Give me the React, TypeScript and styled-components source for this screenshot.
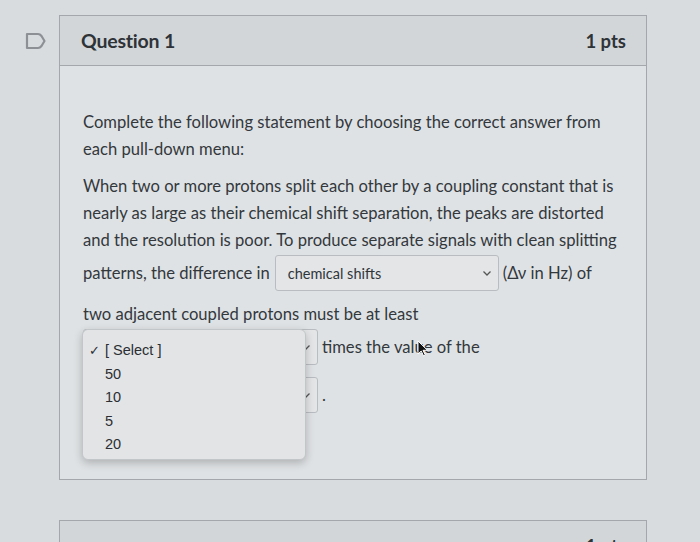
import { createGlobalStyle, styled } from 'styled-components'

const GlobalStyle = createGlobalStyle`
  html, body {
    margin: 0;
    padding: 0;
    background: #d9dcdf;
    font-family: Lato, "Open Sans", sans-serif;
    color: #33383d;
  }
`

const Page = styled.div`
  position: relative;
  display: flex;
  flex-direction: column;
  gap: 40px;
  padding-top: 15px;
  height: 542px;
  box-sizing: border-box;
  overflow: hidden;
`

const QuestionRow = styled.div`
  display: flex;
  align-items: flex-start;
`

const FlagColumn = styled.div`
  width: 59px;
  flex: none;
  display: flex;
  justify-content: flex-start;
  padding-top: 17px;
  padding-left: 25px;
  box-sizing: border-box;
`

const Card = styled.div`
  width: 586px;
  border: 1px solid #a4a8ac;
  background: #dfe2e4;
`

const Header = styled.div`
  height: 49px;
  display: flex;
  align-items: center;
  justify-content: space-between;
  padding: 0 20px 0 21px;
  background: #d3d6d9;
  border-bottom: 1px solid #a4a8ac;
`

const Title = styled.h2`
  margin: 0;
  font-size: 19.5px;
  font-weight: 700;
  color: #2e3338;
  letter-spacing: -0.2px;
`

const Points = styled.span`
  font-size: 18.5px;
  font-weight: 700;
  color: #2e3338;
`

const Body = styled.div`
  padding: 43px 20px 66px 23px;
  font-size: 16.6px;
  line-height: 27px;
`

const Para = styled.p`
  margin: 0 0 10px;
`

const Line = styled.div<{ $gap?: number }>`
  display: flex;
  align-items: center;
  margin-top: ${(p) => p.$gap ?? 0}px;
  min-height: 27px;
`

const SelectWrap = styled.span`
  position: relative;
  display: inline-flex;
`

const SelectBox = styled.span<{ $width: number; $flush?: boolean }>`
  display: inline-flex;
  align-items: center;
  justify-content: space-between;
  box-sizing: border-box;
  width: ${(p) => p.$width}px;
  height: 36px;
  padding: 0 6px 0 12px;
  margin: 0 4px 0 ${(p) => (p.$flush ? 0 : 5)}px;
  border: 1px solid #b9bdc1;
  border-radius: 3px;
  background: #e3e5e7;
  font-size: 14.5px;
  color: #30353a;
`

const Menu = styled.div`
  position: absolute;
  left: -1px;
  top: 0;
  width: 224px;
  box-sizing: border-box;
  padding: 9px 0 2px;
  border-radius: 6px;
  border: 1px solid #c3c6c9;
  background: #e2e4e6;
  box-shadow: 0 3px 8px rgba(0, 0, 0, 0.22);
  font-family: "Liberation Sans", Arial, sans-serif;
  font-size: 14.5px;
  line-height: 23.5px;
  color: #2b2f33;
  z-index: 2;
`

const MenuItem = styled.div`
  display: flex;
  align-items: center;
  padding-left: 6px;
`

const Check = styled.span`
  width: 16px;
  font-size: 13px;
`

const Cursor = styled.svg`
  position: absolute;
  left: 417px;
  top: 340px;
`

const Chevron = () => (
  <svg width="10" height="7" viewBox="0 0 10 7">
    <path d="M1.5 1.5 L5 5 L8.5 1.5" fill="none" stroke="#555" strokeWidth="1.3" />
  </svg>
)

const Flag = () => (
  <svg width="22" height="18" viewBox="0 0 22 18">
    <path
      d="M2 2 H13 Q15 2 16.5 4 L19.5 9 L16.5 14 Q15 16 13 16 H2 Z"
      fill="none"
      stroke="#8d9196"
      strokeWidth="2.2"
      strokeLinejoin="round"
    />
  </svg>
)

const options = ['50', '10', '5', '20']

export default function App() {
  return (
    <>
      <GlobalStyle />
      <Page>
        <QuestionRow>
          <FlagColumn>
            <Flag />
          </FlagColumn>
          <Card>
            <Header>
              <Title>Question 1</Title>
              <Points>1 pts</Points>
            </Header>
            <Body>
              <Para>
                Complete the following statement by choosing the correct answer from
                <br />
                each pull-down menu:
              </Para>
              <Para>
                When two or more protons split each other by a coupling constant that is
                <br />
                nearly as large as their chemical shift separation, the peaks are distorted
                <br />
                and the resolution is poor. To produce separate signals with clean splitting
              </Para>
              <Line $gap={-9}>
                patterns, the difference in
                <SelectBox $width={224}>
                  chemical shifts
                  <Chevron />
                </SelectBox>
                (Δν&nbsp;in Hz) of
              </Line>
              <Line $gap={10}>two adjacent coupled protons must be at least</Line>
              <Line $gap={1}>
                <SelectWrap>
                  <SelectBox $width={235} $flush>
                    <span />
                    <Chevron />
                  </SelectBox>
                  <Menu>
                    <MenuItem>
                      <Check>✓</Check>[ Select ]
                    </MenuItem>
                    {options.map((o) => (
                      <MenuItem key={o}>
                        <Check />
                        {o}
                      </MenuItem>
                    ))}
                  </Menu>
                </SelectWrap>
                times the value of the
              </Line>
              <Line $gap={12}>
                <SelectBox $width={235} $flush>
                  <span />
                  <Chevron />
                </SelectBox>
                .
              </Line>
            </Body>
          </Card>
        </QuestionRow>
        <QuestionRow>
          <FlagColumn />
          <Card>
            <Header>
              <span />
              <Points>1 pts</Points>
            </Header>
          </Card>
        </QuestionRow>
        <Cursor width="12" height="17" viewBox="0 0 12 17">
          <path d="M1 1 L1 14 L4.2 11 L6.6 16 L8.4 15.2 L6 10.3 L10.5 10.3 Z" fill="#111" stroke="#fff" strokeWidth="1" />
        </Cursor>
      </Page>
    </>
  )
}
